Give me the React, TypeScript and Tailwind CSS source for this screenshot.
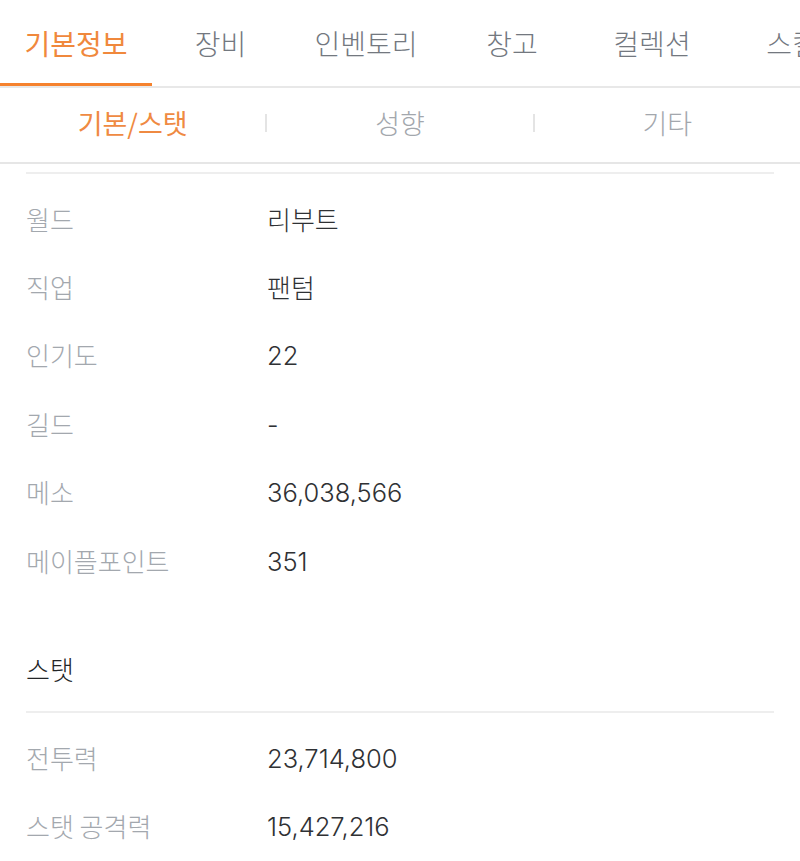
import React from "react";

const font = { fontFamily: '"Noto Sans CJK KR", "Noto Sans", sans-serif' };
const numFont = { fontFamily: 'Inter, "Noto Sans CJK KR", sans-serif' };

function Value({ v }: { v: string }) {
  const numeric = /^[0-9,\-]+$/.test(v);
  if (numeric) {
    return (
      <div className="text-[#2f3134] text-[25.5px] pt-[3px]" style={numFont}>
        {v}
      </div>
    );
  }
  return <div className="text-[#2f3134] text-[26px]">{v}</div>;
}

export default function App() {
  const info = [
    ["월드", "리부트"],
    ["직업", "팬텀"],
    ["인기도", "22"],
    ["길드", "-"],
    ["메소", "36,038,566"],
    ["메이플포인트", "351"],
  ];
  const stats = [
    ["전투력", "23,714,800"],
    ["스탯 공격력", "15,427,216"],
  ];
  return (
    <div className="w-[800px] h-[861px] overflow-hidden bg-white font-light" style={font}>
      {/* top tabs */}
      <div className="relative flex h-[88px] border-b-2 border-[#e8e8e8] overflow-hidden whitespace-nowrap text-[28px]">
        <div className="relative flex items-center justify-center w-[152px] shrink-0 text-[#f0883c] font-normal">
          기본정보
          <div className="absolute left-0 right-0 bottom-[-2px] h-[5px] bg-[#f5822e]" />
        </div>
        <div className="flex items-center justify-center w-[137px] shrink-0 text-[#73787f]">장비</div>
        <div className="flex items-center justify-center w-[154px] shrink-0 text-[#73787f]">인벤토리</div>
        <div className="flex items-center justify-center w-[138px] shrink-0 text-[#73787f]">창고</div>
        <div className="flex items-center justify-center w-[142px] shrink-0 text-[#73787f]">컬렉션</div>
        <div className="flex items-center justify-center w-[138px] shrink-0 text-[#73787f]">스킬</div>
      </div>
      {/* sub tabs */}
      <div className="flex h-[76px] border-b-2 border-[#e6e6e6] items-center pb-[4px]">
        <div className="flex-1 flex items-center justify-center text-[27px] text-[#ef8a42] font-normal">기본/스탯</div>
        <div className="w-[2px] h-[18px] bg-[#e4e4e4]" />
        <div className="flex-1 flex items-center justify-center text-[27px] text-[#a3a7ad]">성향</div>
        <div className="w-[2px] h-[18px] bg-[#e4e4e4]" />
        <div className="flex-1 flex items-center justify-center text-[27px] text-[#a3a7ad]">기타</div>
      </div>
      {/* content */}
      <div className="px-[26px] pt-[8px]">
        <div className="border-t-2 border-[#eeeeee] pt-[10px]">
          {info.map(([k, v]) => (
            <div key={k} className="flex items-center h-[68.4px] text-[26px]">
              <div className="w-[241px] text-[#a3a8ae]">{k}</div>
              <Value v={v} />
            </div>
          ))}
        </div>
        <div className="mt-[56px] h-[36px] flex items-center text-[26px] text-[#222427]">스탯</div>
        <div className="mt-[25px] border-t-2 border-[#eeeeee] pt-[10px]">
          {stats.map(([k, v]) => (
            <div key={k} className="flex items-center h-[68px] text-[26px]">
              <div className="w-[241px] text-[#a3a8ae]">{k}</div>
              <Value v={v} />
            </div>
          ))}
        </div>
      </div>
    </div>
  );
}
